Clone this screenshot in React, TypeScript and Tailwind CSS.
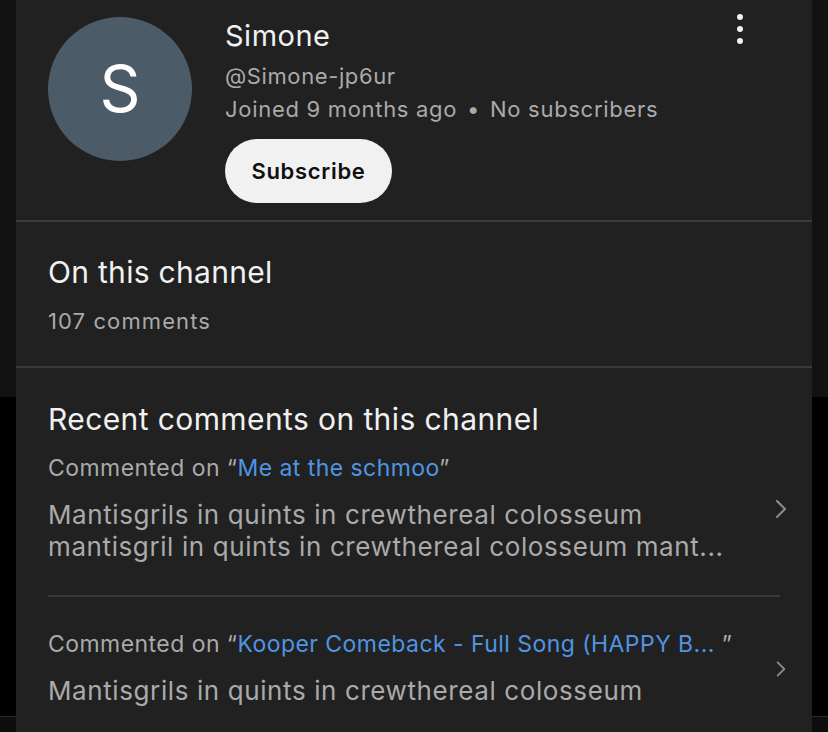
import React from "react";

const font = { fontFamily: "Inter, Roboto, 'Noto Sans', sans-serif" };

const Chevron = ({ className }: { className?: string }) => (
  <svg viewBox="0 0 12 20" className={className} fill="none">
    <path d="M2 2l8 8-8 8" stroke="#8a8a8a" strokeWidth="2.2" strokeLinecap="round" strokeLinejoin="round" />
  </svg>
);

const SideStrip = () => (
  <div className="w-4 shrink-0 flex flex-col">
    <div className="h-[397px] bg-[#121212]" />
    <div className="h-[319px] bg-black" />
    <div className="h-px bg-[#2a2a2a]" />
    <div className="flex-1 bg-[#0d0d0d]" />
  </div>
);

const comments = [
  {
    video: "Me at the schmoo",
    text: "Mantisgrils in quints in crewthereal colosseum mantisgril in quints in crewthereal colosseum mant...",
  },
  {
    video: "Kooper Comeback - Full Song (HAPPY B... ",
    text: "Mantisgrils in quints in crewthereal colosseum",
  },
];

export default function App() {
  return (
    <div className="flex h-[732px] w-[828px] overflow-hidden bg-black" style={font}>
      <SideStrip />
      <div className="flex-1 bg-[#212121] flex flex-col">
        {/* header */}
        <div className="flex pl-8 pr-[69px] pt-[17px] pb-[17px] border-b-2 border-[#3a3a3a]">
          <div className="w-[144px] h-[144px] rounded-full bg-[#4b5b68] flex items-center justify-center shrink-0">
            <span className="text-white text-[64px] leading-none">S</span>
          </div>
          <div className="ml-[33px] flex-1 flex flex-col">
            <div className="text-[#f1f1f1] text-[29px] leading-[34px] mt-[2px] tracking-[0.5px]">Simone</div>
            <div className="text-[#aaaaaa] text-[22px] leading-[32px] mt-[7px] tracking-[0.6px]">@Simone-jp6ur</div>
            <div className="text-[#aaaaaa] text-[22px] leading-[32px] mt-[1px] tracking-[0.7px]">
              Joined 9 months ago <span className="mx-[3px]">•</span> No subscribers
            </div>
            <button className="mt-[14px] w-[167px] h-[64px] rounded-full bg-[#f1f1f1] text-[#0f0f0f] text-[22px] font-semibold tracking-[0.7px]">
              Subscribe
            </button>
          </div>
          <div className="flex flex-col gap-[6px] mt-[-3px]">
            <span className="w-[6px] h-[6px] rounded-full bg-[#f1f1f1]" />
            <span className="w-[6px] h-[6px] rounded-full bg-[#f1f1f1]" />
            <span className="w-[6px] h-[6px] rounded-full bg-[#f1f1f1]" />
          </div>
        </div>

        {/* on this channel */}
        <div className="px-8 pt-[32px] pb-[31px] border-b-2 border-[#3a3a3a]">
          <div className="text-[#f1f1f1] text-[30px] leading-[36px] tracking-[0.3px]">On this channel</div>
          <div className="text-[#aaaaaa] text-[22px] leading-[28px] mt-[17px] tracking-[1.1px]">107 comments</div>
        </div>

        {/* recent comments */}
        <div className="pt-[33px]">
          <div className="px-8 text-[#f1f1f1] text-[30px] leading-[36px] tracking-[0.4px]">Recent comments on this channel</div>
          <div className="flex flex-col">
            {comments.map((c, i) => (
              <div key={i} className={i > 0 ? "mx-8 border-t-2 border-[#3a3a3a] pt-[33px]" : "mx-8 pt-[17px] pb-[32px]"}>
                <div className="flex items-center">
                  <div className="flex-1">
                    <div className="text-[#aaaaaa] text-[23px] leading-[28px] tracking-[0.45px]">
                      Commented on “<span className="text-[#4f95e2]">{c.video}</span>”
                    </div>
                    <div className="text-[#aaaaaa] text-[26px] leading-[32px] mt-[17px] max-w-[700px] tracking-[0.6px] line-clamp-2">
                      {c.text}
                    </div>
                  </div>
                  <Chevron className={i > 0 ? "w-[10px] h-[20px] mr-[-6px]" : "w-[12px] h-[20px] mr-[-7px]"} />
                </div>
              </div>
            ))}
          </div>
        </div>
      </div>
      <SideStrip />
    </div>
  );
}
